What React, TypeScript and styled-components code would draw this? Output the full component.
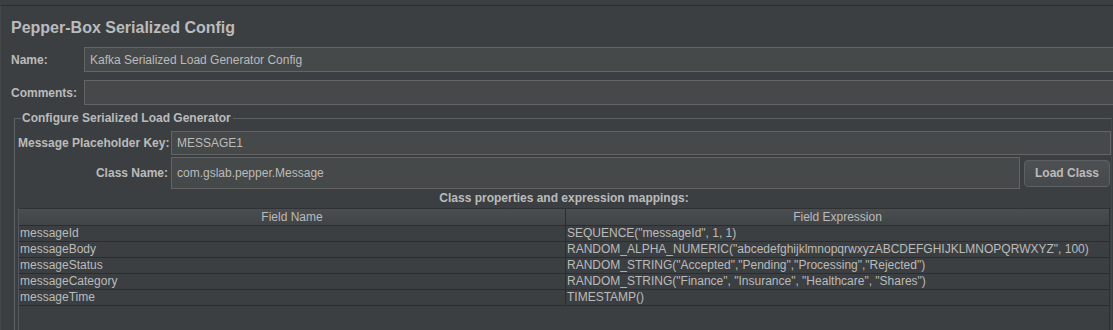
import React from 'react';
import styled, { createGlobalStyle } from 'styled-components';

const GlobalStyle = createGlobalStyle`
  html, body {
    margin: 0;
    padding: 0;
    background: #3c3f41;
  }
  body {
    font-family: "Liberation Sans", Arial, sans-serif;
    font-size: 12px;
    color: #bbbbbb;
    overflow: hidden;
  }
`;

const Page = styled.div`
  width: 1113px;
  height: 330px;
  padding-top: 5px;
  box-sizing: border-box;
  overflow: hidden;
`;

const Panel = styled.div`
  border-top: 1px solid #2b2d2e;
  border-left: 1px solid #45484a;
  padding: 0 0 0 10px;
  height: 100%;
  box-sizing: border-box;
`;

const Title = styled.h1`
  margin: 12px 0 9px;
  font-size: 16px;
  line-height: 20px;
  font-weight: bold;
  color: #bbbbbb;
`;

const FormRow = styled.div`
  display: grid;
  grid-template-columns: 73px 1fr;
  align-items: center;
  margin-bottom: 8px;
  margin-right: -20px;
`;

const Label = styled.label<{ $align?: 'left' | 'right' }>`
  font-weight: bold;
  color: #bbbbbb;
  text-align: ${(p) => p.$align ?? 'left'};
  white-space: nowrap;
`;

const TextField = styled.div<{ $height?: number }>`
  height: ${(p) => p.$height ?? 25}px;
  box-sizing: border-box;
  background: #45494a;
  border: 1px solid #646464;
  padding: 0 5px;
  display: flex;
  align-items: center;
  color: #bbbbbb;
  white-space: nowrap;
  overflow: hidden;
`;

const Group = styled.fieldset`
  margin: -2px 0 0 3px;
  width: 1098px;
  box-sizing: border-box;
  border: 1px solid #5e6163;
  border-right-color: #45484a;
  padding: 6px 0 0 3px;
  min-width: 0;
`;

const GroupTitle = styled.legend`
  font-weight: bold;
  color: #bbbbbb;
  padding: 0 2px 0 1px;
  margin-left: 3px;
  line-height: 14px;
`;

const GroupGrid = styled.div`
  display: grid;
  grid-template-columns: 150px 1fr;
  column-gap: 3px;
  row-gap: 2px;
  align-items: center;
`;

const ClassRow = styled.div`
  display: flex;
  align-items: center;
  gap: 4px;
  margin-right: 1px;
`;

const Grow = styled.div`
  flex: 1;
`;

const Button = styled.button`
  width: 86px;
  height: 27px;
  font-family: "Liberation Sans", Arial, sans-serif;
  font-size: 12px;
  font-weight: bold;
  color: #bbbbbb;
  background: linear-gradient(#4d5153, #45494b);
  border: 1px solid #5e6163;
  border-radius: 4px;
  padding: 0;
`;

const Caption = styled.div`
  font-weight: bold;
  text-align: center;
  line-height: 19px;
  margin-right: 1px;
`;

const Table = styled.div`
  margin-right: 1px;
  border-left: 1px solid #55585a;
  border-right: 1px solid #2f3133;
  height: 140px;
`;

const Head = styled.div`
  display: grid;
  grid-template-columns: 546px 1fr;
  height: 18px;
  background: linear-gradient(#4b4e50, #414446);
  border-top: 1px solid #2f3133;
  border-bottom: 1px solid #2b2d2f;
  box-sizing: border-box;
`;

const HeadCell = styled.div`
  text-align: center;
  line-height: 16px;
  & + & {
    border-left: 1px solid #2b2d2f;
  }
`;

const Row = styled.div`
  display: grid;
  grid-template-columns: 546px 1fr;
  height: 16px;
  box-sizing: border-box;
  border-bottom: 1px solid #2b2d2f;
`;

const Cell = styled.div`
  padding-left: 1px;
  line-height: 15px;
  white-space: nowrap;
  overflow: hidden;
  & + & {
    border-left: 1px solid #2b2d2f;
  }
`;

const mappings: [string, string][] = [
  ['messageId', 'SEQUENCE("messageId", 1, 1)'],
  ['messageBody', 'RANDOM_ALPHA_NUMERIC("abcedefghijklmnopqrwxyzABCDEFGHIJKLMNOPQRWXYZ", 100)'],
  ['messageStatus', 'RANDOM_STRING("Accepted","Pending","Processing","Rejected")'],
  ['messageCategory', 'RANDOM_STRING("Finance", "Insurance", "Healthcare", "Shares")'],
  ['messageTime', 'TIMESTAMP()'],
];

export default function App() {
  return (
    <Page>
      <GlobalStyle />
      <Panel>
        <Title>Pepper-Box Serialized Config</Title>
        <FormRow>
          <Label>Name:</Label>
          <TextField>Kafka Serialized Load Generator Config</TextField>
        </FormRow>
        <FormRow>
          <Label>Comments:</Label>
          <TextField />
        </FormRow>
        <Group>
          <GroupTitle>Configure Serialized Load Generator</GroupTitle>
          <GroupGrid>
            <Label $align="right">Message Placeholder Key:</Label>
            <TextField $height={24}>MESSAGE1</TextField>
            <Label $align="right">Class Name:</Label>
            <ClassRow>
              <Grow>
                <TextField $height={32}>com.gslab.pepper.Message</TextField>
              </Grow>
              <Button>Load Class</Button>
            </ClassRow>
          </GroupGrid>
          <Caption>Class properties and expression mappings:</Caption>
          <Table>
            <Head>
              <HeadCell>Field Name</HeadCell>
              <HeadCell>Field Expression</HeadCell>
            </Head>
            {mappings.map(([name, expr]) => (
              <Row key={name}>
                <Cell>{name}</Cell>
                <Cell>{expr}</Cell>
              </Row>
            ))}
          </Table>
        </Group>
      </Panel>
    </Page>
  );
}
